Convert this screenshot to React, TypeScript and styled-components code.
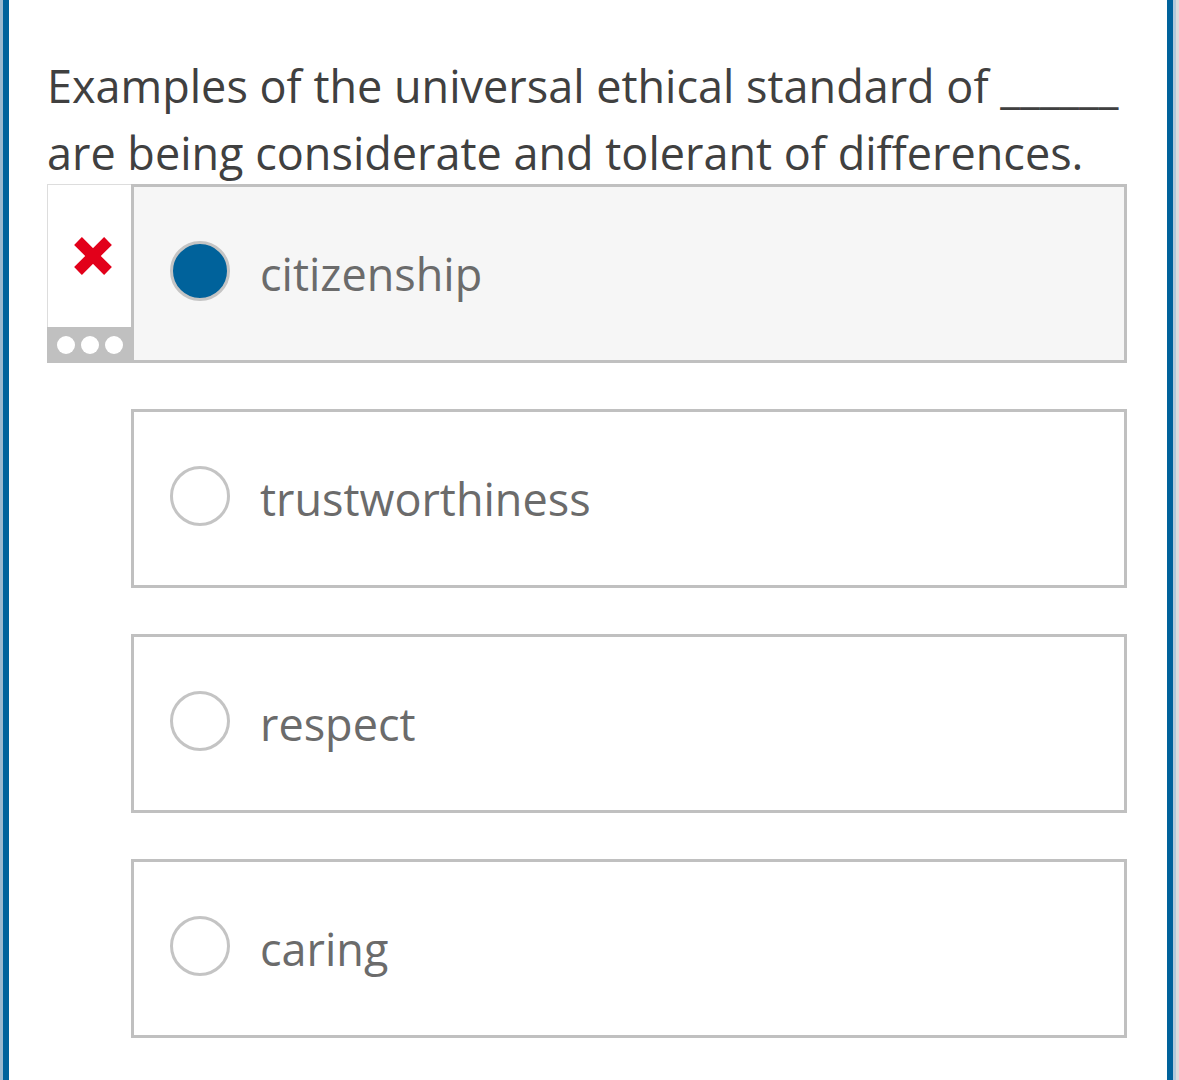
import React from "react";
import styled, { createGlobalStyle } from "styled-components";

const GlobalStyle = createGlobalStyle`
  html, body {
    margin: 0;
    padding: 0;
    background: #ffffff;
  }
  body {
    font-family: "Open Sans", "Noto Sans", sans-serif;
  }
`;

const Shell = styled.div`
  min-height: 100vh;
  box-sizing: border-box;
  border-right: 3px solid #dcdcdc;
  display: flex;
`;

const Rim = styled.div`
  flex: 1;
  display: flex;
  border-left: 3px solid #9ab8ce;
  border-right: 3px solid #b3c9da;
`;

const Frame = styled.div`
  flex: 1;
  border-left: 6px solid #00629b;
  border-right: 6px solid #00629b;
  padding: 52px 40px 40px 38px;
`;

const Question = styled.p`
  margin: 0 0 -2px;
  font-size: 45px;
  line-height: 67px;
  color: #404040;
`;

const OptionList = styled.div`
  display: flex;
  flex-direction: column;
  gap: 46px;
`;

const Row = styled.div`
  display: flex;
  height: 179px;
`;

const Side = styled.div`
  width: 84px;
  flex: none;
  display: flex;
  flex-direction: column;
`;

const Feedback = styled.div`
  flex: 1;
  box-sizing: border-box;
  border: 1px solid #dddddd;
  border-right: none;
  border-bottom: none;
  display: flex;
  align-items: center;
  justify-content: center;
  padding-left: 6px;
  background: #ffffff;
`;

const More = styled.div`
  height: 36px;
  background: #c0c0c0;
  display: flex;
  align-items: center;
  justify-content: center;
  gap: 6px;
  padding-left: 2px;
`;

const Dot = styled.span`
  width: 18px;
  height: 18px;
  border-radius: 50%;
  background: #ffffff;
`;

const Choice = styled.label<{ $selected?: boolean }>`
  flex: 1;
  box-sizing: border-box;
  border: 3px solid #c0c0c0;
  background: ${(p) => (p.$selected ? "#f6f6f6" : "#ffffff")};
  display: flex;
  align-items: center;
  padding-left: 36px;
  gap: 30px;
  cursor: pointer;
`;

const Radio = styled.span<{ $selected?: boolean }>`
  width: 60px;
  height: 60px;
  box-sizing: border-box;
  flex: none;
  border-radius: 50%;
  border: 3px solid #c4c4c4;
  background: ${(p) => (p.$selected ? "#00629b" : "#ffffff")};
  margin-top: -6px;
`;

const ChoiceText = styled.span`
  font-size: 45px;
  color: #6b6b6b;
`;

const WrongMark = () => (
  <svg width="42" height="42" viewBox="0 0 42 42">
    <path
      d="M6 6 L36 36 M36 6 L6 36"
      stroke="#e2001a"
      strokeWidth="11"
      strokeLinecap="butt"
    />
  </svg>
);

const options = ["citizenship", "trustworthiness", "respect", "caring"];
const chosen = 0;

export default function App() {
  return (
    <>
      <GlobalStyle />
      <Shell>
        <Rim>
          <Frame>
            <Question>
              Examples of the universal ethical standard of ______ are being
              considerate and tolerant of differences.
            </Question>
            <OptionList>
              {options.map((opt, i) => (
                <Row key={opt}>
                  <Side>
                    {i === chosen && (
                      <>
                        <Feedback>
                          <WrongMark />
                        </Feedback>
                        <More>
                          <Dot />
                          <Dot />
                          <Dot />
                        </More>
                      </>
                    )}
                  </Side>
                  <Choice $selected={i === chosen}>
                    <Radio $selected={i === chosen} />
                    <ChoiceText>{opt}</ChoiceText>
                  </Choice>
                </Row>
              ))}
            </OptionList>
          </Frame>
        </Rim>
      </Shell>
    </>
  );
}
